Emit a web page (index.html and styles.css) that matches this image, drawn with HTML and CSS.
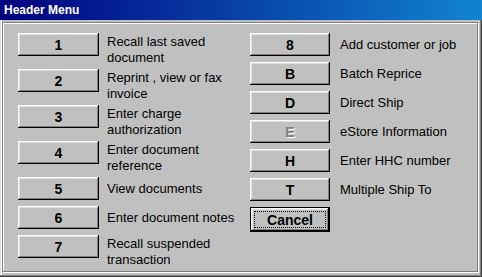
FILE: index.html
```html
<!DOCTYPE html>
<html>
<head>
<meta charset="utf-8">
<link rel="stylesheet" href="styles.css">
</head>
<body>
<div class="window">
  <div class="titlebar"><span class="title">Header Menu</span></div>
  <div class="frame">
    <div class="col col-left">
      <div class="row two"><div class="btn">1</div><div class="label">Recall last saved<br>document</div></div>
      <div class="row two"><div class="btn">2</div><div class="label">Reprint , view or fax<br>invoice</div></div>
      <div class="row two"><div class="btn">3</div><div class="label">Enter charge<br>authorization</div></div>
      <div class="row two"><div class="btn">4</div><div class="label">Enter document<br>reference</div></div>
      <div class="row one"><div class="btn">5</div><div class="label">View documents</div></div>
      <div class="row one"><div class="btn">6</div><div class="label">Enter document notes</div></div>
      <div class="row two"><div class="btn">7</div><div class="label">Recall suspended<br>transaction</div></div>
    </div>
    <div class="col col-right">
      <div class="row one"><div class="btn">8</div><div class="label">Add customer or job</div></div>
      <div class="row one"><div class="btn">B</div><div class="label">Batch Reprice</div></div>
      <div class="row one"><div class="btn">D</div><div class="label">Direct Ship</div></div>
      <div class="row one"><div class="btn disabled">E</div><div class="label">eStore Information</div></div>
      <div class="row one"><div class="btn">H</div><div class="label">Enter HHC number</div></div>
      <div class="row one"><div class="btn">T</div><div class="label">Multiple Ship To</div></div>
      <div class="row one"><div class="btn default">Cancel</div></div>
    </div>
  </div>
</div>
</body>
</html>
```

FILE: styles.css
```css
html, body {
  margin: 0;
  padding: 0;
}
body {
  width: 482px;
  height: 277px;
  overflow: hidden;
  background: #c0c0c0;
  font-family: "Liberation Sans", Arial, sans-serif;
  color: #000;
}
.window {
  width: 482px;
  height: 277px;
  box-sizing: border-box;
  padding: 0 2px 0 2px;
  display: flex;
  flex-direction: column;
  background: #c0c0c0;
  box-shadow: inset -1px -1px #404040, inset -2px -2px #808080, inset 1px 0 #dfdfdf, inset 2px 0 #ffffff;
}
.titlebar {
  margin: 0 -2px;
  height: 20px;
  background: linear-gradient(to right, #000080, #1084d0);
  display: flex;
  align-items: center;
  padding-left: 4px;
}
.title {
  color: #fff;
  font-weight: bold;
  font-size: 12px;
  line-height: 14px;
}
.frame {
  margin-top: 2px;
  width: 476px;
  height: 250px;
  box-sizing: border-box;
  border: 1px solid #808080;
  box-shadow: inset 1px 1px #ffffff, 1px 1px #ffffff;
  padding: 10px 0 0 15px;
  display: flex;
}
.col {
  display: flex;
  flex-direction: column;
}
.col-left {
  width: 232px;
}
.row {
  display: flex;
  align-items: center;
  height: 29px;
  flex: none;
}
.row.one {
  height: 29px;
  align-items: flex-start;
}
.row.one .label {
  margin-top: 4px;
}
.row.two {
  height: 36px;
  align-items: flex-start;
}
.row.two .label {
  margin-top: 1px;
}
.btn {
  width: 81px;
  height: 23px;
  flex: none;
  box-sizing: border-box;
  display: flex;
  align-items: center;
  justify-content: center;
  background: #c0c0c0;
  font-weight: bold;
  font-size: 14px;
  box-shadow: inset -1px -1px #000000, inset 1px 1px #ffffff, inset -2px -2px #808080, inset 2px 2px #dfdfdf;
}
.col-right .btn {
  width: 80px;
}
.btn.disabled {
  color: #808080;
  text-shadow: 1px 1px #ffffff;
}
.btn.default {
  position: relative;
  height: 25px;
  border: 1px solid #000;
  box-shadow: inset -1px -1px #000000, inset 1px 1px #ffffff, inset -2px -2px #808080, inset 2px 2px #dfdfdf;
  padding-top: 1px;
}
.btn.default::after {
  content: "";
  position: absolute;
  left: 3px;
  top: 3px;
  right: 3px;
  bottom: 3px;
  border: 1px dotted #000;
}
.label {
  margin-left: 8px;
  font-size: 13px;
  line-height: 16px;
  white-space: nowrap;
}
.col-right .label {
  margin-left: 10px;
}
```
